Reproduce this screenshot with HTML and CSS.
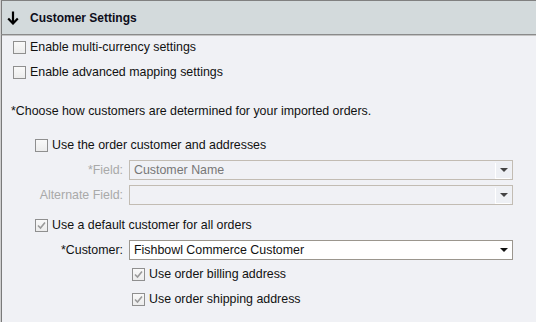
FILE: index.html
```html
<!DOCTYPE html>
<html>
<head>
<meta charset="utf-8">
<link rel="stylesheet" href="styles.css">
</head>
<body>
<div class="panel">
  <div class="header">
    <svg class="arrow" width="12" height="14" viewBox="0 0 12 14"><path d="M6 0.5 V12.5 M1.2 7.6 L6 12.5 L10.8 7.6" fill="none" stroke="#000" stroke-width="2.2"/></svg>
    <span class="title">Customer Settings</span>
  </div>
  <div class="content">
    <div class="row r1"><span class="cb"></span><span>Enable multi-currency settings</span></div>
    <div class="row r2"><span class="cb"></span><span>Enable advanced mapping settings</span></div>
    <div class="row r3"><span>*Choose how customers are determined for your imported orders.</span></div>
    <div class="group">
      <div class="row r4"><span class="cb"></span><span>Use the order customer and addresses</span></div>
      <div class="row field r5">
        <span class="lbl dis">*Field:</span>
        <div class="select disabled"><span class="val">Customer Name</span><span class="btn"><i class="tri"></i></span></div>
      </div>
      <div class="row field r6">
        <span class="lbl dis">Alternate Field:</span>
        <div class="select disabled"><span class="val"></span><span class="btn"><i class="tri"></i></span></div>
      </div>
      <div class="row r7"><span class="cb checked"><svg width="11" height="11" viewBox="0 0 11 11"><path d="M2 5.5 L4.5 8 L9 2.5" fill="none" stroke="#9a9a9a" stroke-width="1.6"/></svg></span><span>Use a default customer for all orders</span></div>
      <div class="row field r8">
        <span class="lbl">*Customer:</span>
        <div class="select"><span class="val">Fishbowl Commerce Customer</span><span class="btn"><i class="tri dark"></i></span></div>
      </div>
      <div class="sub">
        <div class="row r9"><span class="cb checked"><svg width="11" height="11" viewBox="0 0 11 11"><path d="M2 5.5 L4.5 8 L9 2.5" fill="none" stroke="#9a9a9a" stroke-width="1.6"/></svg></span><span>Use order billing address</span></div>
        <div class="row r10"><span class="cb checked"><svg width="11" height="11" viewBox="0 0 11 11"><path d="M2 5.5 L4.5 8 L9 2.5" fill="none" stroke="#9a9a9a" stroke-width="1.6"/></svg></span><span>Use order shipping address</span></div>
      </div>
    </div>
  </div>
</div>
</body>
</html>
```
FILE: styles.css
```css
html, body {
  margin: 0;
  padding: 0;
  width: 536px;
  height: 322px;
  overflow: hidden;
  background: #f0f1f5;
}
body {
  font-family: "Liberation Sans", Arial, sans-serif;
  font-size: 12.4px;
  color: #111;
}
.panel {
  height: 322px;
  border-left: 1px solid #cfcfcf;
  box-sizing: border-box;
}
.header {
  height: 33px;
  background: #d3dadc;
  border-top: 1px solid #808080;
  border-bottom: 1px solid #8a8a8a;
  box-shadow: 0 1px 0 #c4c4c4, inset 1px 0 0 #7a7a7a;
  display: flex;
  align-items: center;
  padding-left: 6px;
  gap: 11px;
}
.arrow { display: block; margin-top: 1px; }
.title { font-weight: bold; color: #0d0d1a; font-size: 12px; }
.content {
  box-shadow: inset 1px 0 0 #7a7a7a;
  height: 287px;
  padding-left: 12px;
  padding-right: 23px;
  padding-top: 2px;
  box-sizing: border-box;
}
.row {
  height: 20px;
  display: flex;
  align-items: center;
}
.cb {
  width: 13px;
  height: 13px;
  box-sizing: border-box;
  border: 1px solid #8f8f8f;
  background: linear-gradient(#f9f9f9, #ececec);
  margin-right: 4px;
  display: flex;
  align-items: center;
  justify-content: center;
  flex: none;
}
.cb svg { display: block; }
.r2 { margin-top: 5px; }
.r3 { margin-top: 19px; margin-left: -2px; }
.group { padding-left: 22px; }
.r4 { margin-top: 14px; }
.r5, .r6, .r8 { margin-top: 5px; }
.r7 { margin-top: 10px; }
.r9 { margin-top: 4px; }
.r10 { margin-top: 5px; }
.field { gap: 6px; }
.lbl {
  width: 88px;
  text-align: right;
  flex: none;
}
.lbl.dis { color: #a9a9a9; }
.select {
  flex: 1;
  height: 20px;
  box-sizing: border-box;
  border: 1px solid #9b968e;
  background: #fff;
  display: flex;
  align-items: center;
}
.select.disabled {
  border-color: #c2bcb3;
  background: #f0f1f5;
}
.select.disabled .val { color: #777; }
.val {
  flex: 1;
  padding-left: 4px;
  white-space: nowrap;
}
.btn {
  width: 15px;
  height: 16px;
  margin-right: 1px;
  display: flex;
  align-items: center;
  justify-content: center;
}
.select.disabled .btn {
  background: #eef0f4;
  box-shadow: -1px 1px 0 #fff;
  height: 16px;
  margin-top: -1px;
}
.tri {
  width: 0;
  height: 0;
  border-left: 4px solid transparent;
  border-right: 4px solid transparent;
  border-top: 4px solid #444;
  display: block;
}
.tri.dark { border-top-color: #111; }
.sub { padding-left: 97px; }
```
